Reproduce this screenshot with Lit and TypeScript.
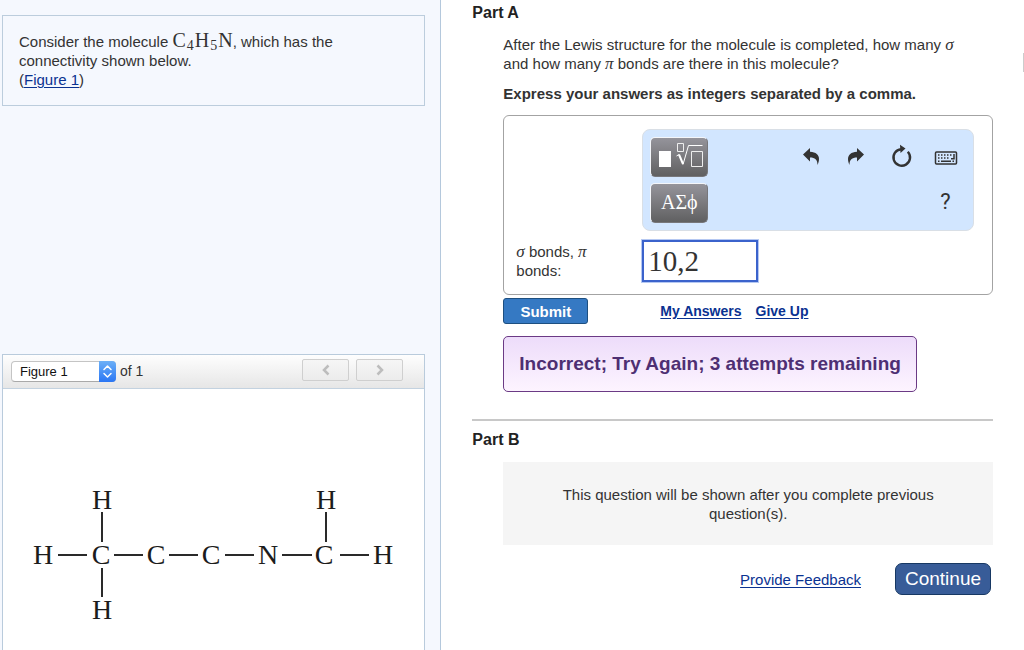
import { LitElement, html, svg, css } from "lit";
import { customElement, property } from "lit/decorators.js";

const ATOMS: [string, number, number][] = [
  ["H", 99, 120],
  ["H", 323, 120],
  ["H", 40, 175],
  ["C", 98, 175],
  ["C", 153, 175],
  ["C", 208, 175],
  ["N", 265, 175],
  ["C", 321, 175],
  ["H", 380, 175],
  ["H", 99, 230],
];

const BONDS: [number, number, number, number][] = [
  [55, 166, 84, 166],
  [111, 166, 140, 166],
  [166, 166, 195, 166],
  [222, 166, 251, 166],
  [279, 166, 309, 166],
  [337, 166, 366, 166],
  [99, 123, 99, 153],
  [99, 179, 99, 208],
  [323, 123, 323, 153],
];

@customElement("molecule-diagram")
export class MoleculeDiagram extends LitElement {
  static styles = css`
    :host { display: block; }
    .drawing { display: block; width: 100%; max-width: 420px; }
    .atom {
      font-family: "Liberation Serif", serif;
      font-size: 28px;
      fill: #1c1c1c;
      text-anchor: middle;
    }
    .bond { stroke: #2a2a2a; stroke-width: 2; }
  `;

  render() {
    return html`
      <svg class="drawing" viewBox="0 0 420 250" role="img" aria-label="Molecule connectivity">
        ${BONDS.map(([a, b, c, d]) => svg`<line class="bond" x1=${a} y1=${b} x2=${c} y2=${d} />`)}
        ${ATOMS.map(([s, x, y]) => svg`<text class="atom" x=${x} y=${y}>${s}</text>`)}
      </svg>
    `;
  }
}

@customElement("figure-viewer")
export class FigureViewer extends LitElement {
  static styles = css`
    :host {
      display: flex;
      flex-direction: column;
      border: 1px solid #b9cbdc;
      border-bottom: 0;
      background: #fff;
    }
    .bar {
      display: flex;
      align-items: center;
      box-sizing: border-box;
      height: 34px;
      padding: 0 21px 0 8px;
      border-bottom: 1px solid #c3d2e0;
      background: linear-gradient(#fefefe, #e6e6e6);
      font-size: 14px;
      color: #333;
    }
    .picker {
      display: grid;
      align-items: center;
      margin-right: 4px;
    }
    .select {
      grid-area: 1 / 1;
      appearance: none;
      width: 105px;
      height: 21px;
      padding: 0 24px 0 8px;
      border: 1px solid #c4c4c4;
      border-bottom-color: #a9a9a9;
      border-radius: 4px;
      background: #fff;
      color: #111;
      font: 13px "Liberation Sans", sans-serif;
    }
    .arrows {
      grid-area: 1 / 1;
      justify-self: end;
      width: 17px;
      height: 21px;
      border-radius: 0 4px 4px 0;
      background: linear-gradient(#6cb0f7, #2a76f4);
      pointer-events: none;
    }
    .pager { display: flex; gap: 7px; margin-left: auto; padding-bottom: 3px; }
    .page {
      display: grid;
      place-items: center;
      width: 47px;
      height: 22px;
      padding: 0;
      border: 1px solid #cfcfcf;
      border-radius: 2px;
      background: linear-gradient(#f6f6f6, #ececec);
    }
    .chevron { width: 10px; height: 12px; }
  `;

  render() {
    return html`
      <div class="bar">
        <div class="picker">
          <select class="select" aria-label="Figure">
            <option>Figure 1</option>
          </select>
          <svg class="arrows" viewBox="0 0 17 21" aria-hidden="true">
            <path d="M5 8.5 8.5 5 12 8.5M5 12.5 8.5 16 12 12.5" fill="none" stroke="#fff" stroke-width="1.5" stroke-linecap="round" stroke-linejoin="round" />
          </svg>
        </div>
        <span>of 1</span>
        <div class="pager">
          <button class="page" aria-label="Previous figure" disabled>
            <svg class="chevron" viewBox="0 0 10 12"><path d="M7.5 1.5 3 6l4.5 4.5" fill="none" stroke="#bdbdbd" stroke-width="2.5" /></svg>
          </button>
          <button class="page" aria-label="Next figure" disabled>
            <svg class="chevron" viewBox="0 0 10 12"><path d="M2.5 1.5 7 6l-4.5 4.5" fill="none" stroke="#bdbdbd" stroke-width="2.5" /></svg>
          </button>
        </div>
      </div>
      <molecule-diagram></molecule-diagram>
    `;
  }
}

@customElement("answer-editor")
export class AnswerEditor extends LitElement {
  @property() value = "10,2";

  static styles = css`
    :host {
      display: grid;
      grid-template-columns: 126px minmax(0, 1fr);
      row-gap: 9px;
      padding: 13px 18px 12px 12px;
      border: 1px solid #a3a3a3;
      border-radius: 6px;
    }
    .toolbar {
      grid-column: 2;
      display: flex;
      justify-content: space-between;
      padding: 7px 5px 7px 7px;
      border: 1px solid #d9dfe6;
      border-radius: 8px;
      background: #d2e6ff;
    }
    .templates { display: grid; gap: 6px; }
    .template {
      display: grid;
      place-items: center;
      box-sizing: border-box;
      width: 58px;
      height: 40px;
      padding: 0;
      border: 1px solid #f4f6fa;
      border-right-color: #77777b;
      border-bottom-color: #77777b;
      border-radius: 5px;
      background: linear-gradient(#95949b, #606061);
      color: #fff;
      font: 20px/24px "Liberation Serif", serif;
      padding-bottom: 3px;
    }
    .root { width: 48px; height: 30px; }
    .actions {
      display: grid;
      grid-template-columns: repeat(4, 45px);
      grid-template-rows: 38px 40px;
      row-gap: 6px;
    }
    .action {
      display: grid;
      place-items: center;
      padding: 0;
      border: 0;
      background: none;
      color: #333;
      font: 22px Roboto, "Liberation Sans", sans-serif;
    }
    .help { grid-column: 4; }
    .icon { width: 24px; height: 24px; }
    .label { font-size: 15px; line-height: 19px; color: #333; padding-top: 2px; }
    .greek { font: italic 17px/1 "Liberation Serif", serif; }
    .field {
      box-sizing: border-box;
      width: 116px;
      height: 42px;
      padding: 0 4px;
      border: 2px solid #3b63cc;
      outline: 1px solid #b5c8f2;
      background: #fff;
      color: #333;
      font: 29px "Liberation Serif", serif;
    }
  `;

  render() {
    return html`
      <div class="toolbar">
        <div class="templates">
          <button class="template" aria-label="Math templates">
            <svg class="root" viewBox="0 0 48 30">
              <path d="M4 10h12v16H4z" fill="#fff" />
              <path d="M22.5 2.5h6v8h-6zM36.5 10.5h11v15h-11z" fill="none" stroke="#eee" />
              <path d="M21.500 15l2.500-1.500" fill="none" stroke="#fff" />
              <path d="M24 13.500l4 9.500" fill="none" stroke="#fff" stroke-width="2" />
              <path d="M28 23.500l5.500-19h14" fill="none" stroke="#fff" />
            </svg>
          </button>
          <button class="template">ΑΣϕ</button>
        </div>
        <div class="actions">
          <button class="action" aria-label="Undo">
            <svg class="icon" viewBox="0 0 24 24"><path d="M4 10.5 11 4v3.800c6 .2 9 3.200 9 7.200 0 2.200-.6 4-1.500 6 0-5.500-2.500-7.500-7.500-7.500V17.500z" fill="#333" /></svg>
          </button>
          <button class="action" aria-label="Redo">
            <svg class="icon" viewBox="0 0 24 24"><path d="M20 10.5 13 4v3.800c-6 .2-9 3.200-9 7.200 0 2.200.6 4 1.500 6 0-5.500 2.500-7.500 7.500-7.500V17.500z" fill="#333" /></svg>
          </button>
          <button class="action" aria-label="Reset">
            <svg class="icon" viewBox="0 0 24 24">
              <path d="M12 5.2a8.300 8.300 0 1 0 6.800 2.600" fill="none" stroke="#333" stroke-width="2.400" />
              <path d="M11 .8 16.500 4.600 11.500 9z" fill="#333" />
            </svg>
          </button>
          <button class="action" aria-label="Keyboard">
            <svg class="icon" viewBox="0 0 24 24">
              <rect x="1.500" y="8" width="21" height="12" rx="1" fill="none" stroke="#333" stroke-width="1.500" />
              <path d="M4 11h13.500M4 14h12" stroke="#333" stroke-width="1.500" stroke-dasharray="1.500 1.500" />
              <path d="M20 10v4.700h-3M4 17.300h1.500M7 17.300h10M18.500 17.300H20" fill="none" stroke="#333" stroke-width="1.500" />
            </svg>
          </button>
          <button class="action help" aria-label="Help">?</button>
        </div>
      </div>
      <label class="label" for="answer"><span class="greek">σ</span> bonds, <span class="greek">π</span><br />bonds:</label>
      <input class="field" id="answer" .value=${this.value} />
    `;
  }
}

@customElement("app-root")
export class AppRoot extends LitElement {
  static styles = css`
    :host {
      display: grid;
      grid-template-columns: 43.1% minmax(0, 1fr);
      min-height: 100vh;
      background: #fff;
      color: #333;
      font: 15px/19px "Liberation Sans", Arial, sans-serif;
    }
    .side {
      display: flex;
      flex-direction: column;
      justify-content: space-between;
      padding: 15px 15px 0 2px;
      border-right: 1px solid #b4c8dc;
      background: #f5f8fe;
    }
    .intro {
      min-height: 56px;
      padding: 16px;
      border: 1px solid #bccddd;
    }
    .formula { font: 20px/1 "Liberation Serif", serif; line-height: 0; }
    .sub { font-size: 14px; line-height: 0; padding: 0 1px; vertical-align: -3px; }
    .greek { font: italic 17px/1 "Liberation Serif", serif; }
    .link { color: #0a3291; text-underline-offset: 2px; }
    .viewer { min-height: 295px; }
    .main { padding: 3px 31px 0 31px; }
    .heading { margin: 0; font-size: 16px; line-height: 19px; color: #222; }
    .part { padding-left: 31px; }
    .prompt { margin: 13px 0 11px; }
    .hint { margin: 0 0 12px; font-weight: bold; }
    .submission { display: flex; align-items: center; margin-top: 3px; font-weight: bold; }
    .submission .link { font-size: 14px; }
    .submit {
      width: 85px;
      height: 26px;
      margin-right: 72px;
      padding: 0;
      border: 1px solid #1d4f80;
      border-radius: 3px;
      background: #3579c3;
      color: #fff;
      font: bold 15px "Liberation Sans", Arial, sans-serif;
    }
    .giveup { margin-left: 14px; }
    .result {
      width: fit-content;
      margin-top: 12px;
      padding: 17px 15px;
      border: 1px solid #6b3a85;
      border-radius: 5px;
      background: linear-gradient(#eddcfa, #fdf4ff);
      color: #4e2f73;
      font-size: 19px;
      line-height: 20px;
      font-weight: bold;
    }
    .rule { height: 2px; margin: 27px 0 9px; border: 0; background: #c8c8c8; }
    .locked {
      margin: 13px 0 18px;
      padding: 23px 50px 22px;
      background: #f5f5f5;
      text-align: center;
    }
    .footer { display: flex; align-items: center; justify-content: flex-end; gap: 34px; padding-right: 2px; }
    .continue {
      width: 96px;
      height: 32px;
      padding: 0;
      border: 1px solid #173863;
      border-radius: 7px;
      background: #385c98;
      color: #fff;
      font: 19px "Liberation Sans", Arial, sans-serif;
    }
    .edge {
      position: absolute;
      top: 53px;
      right: 0;
      width: 1px;
      height: 19px;
      background: #ccc;
    }
  `;

  render() {
    return html`
      <aside class="side">
        <section class="intro">
          Consider the molecule
          <span class="formula">C<span class="sub">4</span>H<span class="sub">5</span>N</span>, which has the<br />
          connectivity shown below.<br />
          (<a class="link" href="#figure">Figure 1</a>)
        </section>
        <figure-viewer class="viewer" id="figure"></figure-viewer>
      </aside>
      <main class="main">
        <h2 class="heading">Part A</h2>
        <section class="part">
          <p class="prompt">
            After the Lewis structure for the molecule is completed, how many <span class="greek">σ</span><br />
            and how many <span class="greek">π</span> bonds are there in this molecule?
          </p>
          <p class="hint">Express your answers as integers separated by a comma.</p>
          <answer-editor></answer-editor>
          <div class="submission">
            <button class="submit">Submit</button>
            <a class="link" href="#answers">My Answers</a>
            <a class="link giveup" href="#giveup">Give Up</a>
          </div>
          <div class="result" role="status">Incorrect; Try Again; 3 attempts remaining</div>
        </section>
        <hr class="rule" />
        <h2 class="heading">Part B</h2>
        <section class="part">
          <div class="locked">This question will be shown after you complete previous question(s).</div>
          <div class="footer">
            <a class="link" href="#feedback">Provide Feedback</a>
            <button class="continue">Continue</button>
          </div>
        </section>
      </main>
      <div class="edge"></div>
    `;
  }
}
